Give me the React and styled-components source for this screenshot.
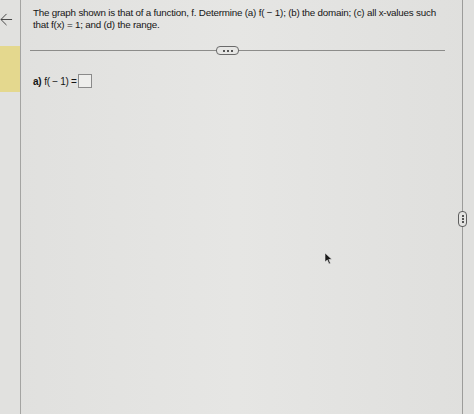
import React from 'react';
import styled, { createGlobalStyle } from 'styled-components';

const GlobalStyle = createGlobalStyle`
  html, body {
    margin: 0;
    padding: 0;
    background: #e3e3e1;
  }
  body {
    font-family: "Liberation Sans", Arial, sans-serif;
    color: #1e1e1e;
  }
`;

const Screen = styled.div`
  position: relative;
  display: flex;
  width: 474px;
  height: 414px;
  overflow: hidden;
  background: linear-gradient(90deg, #e0e0de 0%, #e6e6e4 50%, #dfdfdd 100%);
`;

const Sidebar = styled.div`
  width: 20px;
  flex-shrink: 0;
  display: flex;
  flex-direction: column;
  border-right: 1px solid #a4a4a2;
  background: #e1e1df;
`;

const BackButton = styled.div`
  height: 46px;
  display: flex;
  align-items: flex-start;
  padding-top: 13px;
  box-sizing: border-box;
  color: #4a4a4a;
`;

const Highlight = styled.div`
  height: 46px;
  background: #e4d88e;
`;

const Main = styled.div`
  flex: 1;
  display: flex;
  flex-direction: column;
  padding: 7px 12px 0 12px;
`;

const Question = styled.p`
  margin: 0;
  font-size: 9.8px;
  line-height: 12px;
  letter-spacing: -0.2px;
  white-space: nowrap;
  color: #151515;
`;

const Divider = styled.div`
  position: relative;
  margin: 19px 5px 0 -3px;
  height: 1px;
  background: #8c8c8a;
`;

const Pill = styled.div`
  position: absolute;
  left: ${(p) => p.left}px;
  top: -4px;
  width: 21px;
  height: 7px;
  border: 1px solid #6a6a6a;
  border-radius: 4px;
  background: #e6e6e4;
  display: flex;
  align-items: center;
  justify-content: center;
  gap: 2px;
`;

const Dot = styled.span`
  width: 2px;
  height: 2px;
  background: #555;
`;

const AnswerRow = styled.div`
  display: flex;
  align-items: center;
  gap: 2px;
  margin-top: 23px;
  font-size: 10px;
  letter-spacing: -0.3px;
  color: #151515;
`;

const Label = styled.span`
  font-weight: bold;
  margin-right: 1px;
`;

const AnswerBox = styled.span`
  width: 12px;
  height: 12px;
  margin-left: -1px;
  border: 1px solid #8a8a8a;
  background: #eeeeec;
`;

const RightStrip = styled.div`
  position: relative;
  width: 11px;
  flex-shrink: 0;
  border-left: 1px solid #9c9c9a;
  background: #e0e0de;
`;

const Handle = styled.div`
  position: absolute;
  left: -5px;
  top: 211px;
  width: 7px;
  height: 14px;
  border: 1px solid #5e5e5e;
  border-radius: 4px;
  background: #e4e4e2;
  display: flex;
  flex-direction: column;
  align-items: center;
  justify-content: center;
  gap: 1px;
`;

const Cursor = styled.svg`
  position: absolute;
  left: 324px;
  top: 252px;
`;

const BackArrow = () => (
  <svg width="13" height="13" viewBox="0 0 14 14" fill="none" stroke="#3c3c3c" strokeWidth="1">
    <path d="M13 7 H1 M7 1 L1 7 L7 13" />
  </svg>
);

const App = () => (
  <>
    <GlobalStyle />
    <Screen>
      <Sidebar>
        <BackButton>
          <BackArrow />
        </BackButton>
        <Highlight />
      </Sidebar>
      <Main>
        <Question>
          The graph shown is that of a function, f. Determine (a) f( − 1); (b) the domain; (c) all x-values such
          <br />
          that f(x) = 1; and (d) the range.
        </Question>
        <Divider>
          <Pill left={186}>
            <Dot />
            <Dot />
            <Dot />
          </Pill>
        </Divider>
        <AnswerRow>
          <Label>a)</Label>
          <span>f( − 1) =</span>
          <AnswerBox />
        </AnswerRow>
      </Main>
      <RightStrip>
        <Handle>
          <Dot />
          <Dot />
          <Dot />
        </Handle>
      </RightStrip>
      <Cursor width="9" height="13" viewBox="0 0 9 13">
        <path d="M1 1 L1 10 L3.3 8 L5 12 L6.5 11.3 L4.8 7.5 L8 7.5 Z" fill="#1a1a1a" stroke="#e8e8e8" strokeWidth="0.6" />
      </Cursor>
    </Screen>
  </>
);

export default App;
